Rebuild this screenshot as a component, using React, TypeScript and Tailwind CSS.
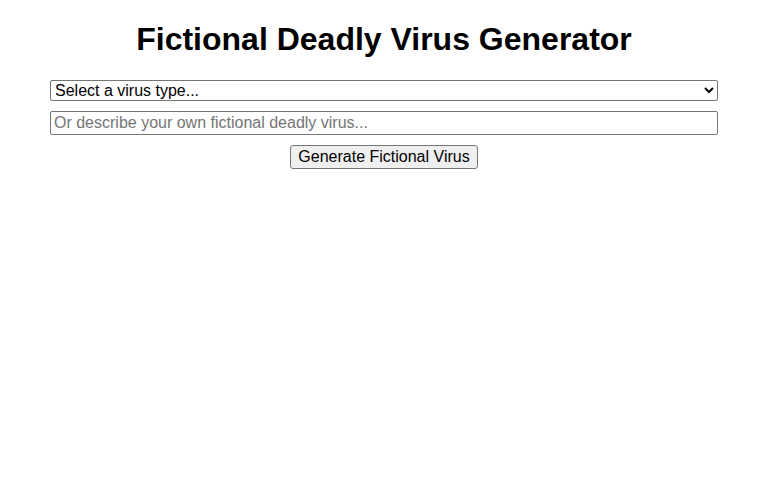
export default function App() {
  return (
    <div className="min-h-screen bg-white px-[50px] font-['Liberation_Sans',Arial,sans-serif] text-black">
      {/* Title */}
      <h1 className="mt-[15px] mb-[17px] text-center text-[32px] font-bold leading-normal">
        Fictional Deadly Virus Generator
      </h1>

      {/* Form */}
      <div className="flex flex-col items-center">
        <select
          defaultValue=""
          className="block h-[21px] w-full appearance-auto rounded-[2px] border border-[#767676] bg-white text-[16px] leading-[18px]"
        >
          <option value="">Select a virus type...</option>
          <option value="airborne">Airborne</option>
          <option value="waterborne">Waterborne</option>
          <option value="vector">Vector-borne</option>
        </select>

        <input
          type="text"
          placeholder="Or describe your own fictional deadly virus..."
          className="mt-[10px] block h-[24px] w-full rounded-[2px] border border-[#767676] bg-white px-[3px] text-[16px] placeholder:text-[#757575]"
        />

        <button className="mt-[10px] h-[24px] rounded-[3px] border border-[#767676] bg-[#efefef] px-[7px] text-[16px] leading-[18px] hover:bg-[#e5e5e5]">
          Generate Fictional Virus
        </button>
      </div>
    </div>
  );
}
